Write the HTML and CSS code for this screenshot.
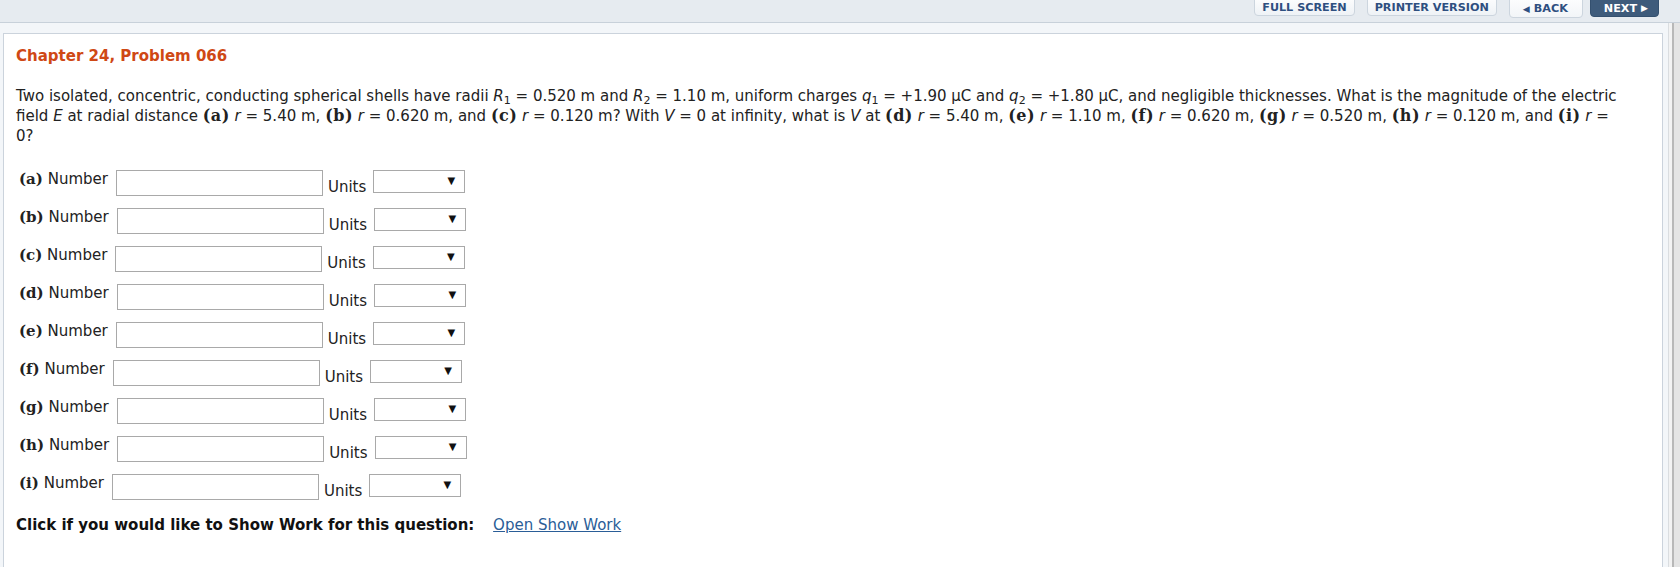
FILE: index.html
```html
<!DOCTYPE html>
<html lang="en">
<head>
    <meta charset="UTF-8">
    <title>Chapter 24, Problem 066</title>
    <link rel="stylesheet" href="styles.css">
</head>
<body>
    <div class="topbar">
        <a class="top-btn">FULL SCREEN</a>
        <a class="top-btn">PRINTER VERSION</a>
        <a class="top-btn top-btn-back"><span class="tri">&#9664;</span>BACK</a>
        <a class="top-btn top-btn-next">NEXT<span class="tri">&#9654;</span></a>
    </div>

    <div class="page">
        <div class="panel">
            <p class="title">Chapter 24, Problem 066</p>

            <p class="question">Two isolated, concentric, conducting spherical shells have radii <i>R</i><sub>1</sub> = 0.520 m and <i>R</i><sub>2</sub> = 1.10 m, uniform charges <i>q</i><sub>1</sub> = +1.90 μC and <i>q</i><sub>2</sub> = +1.80 μC, and negligible thicknesses. What is the magnitude of the electric field <i>E</i> at radial distance <b>(a)</b> <i>r</i> = 5.40 m, <b>(b)</b> <i>r</i> = 0.620 m, and <b>(c)</b> <i>r</i> = 0.120 m? With <i>V</i> = 0 at infinity, what is <i>V</i> at <b>(d)</b> <i>r</i> = 5.40 m, <b>(e)</b> <i>r</i> = 1.10 m, <b>(f)</b> <i>r</i> = 0.620 m, <b>(g)</b> <i>r</i> = 0.520 m, <b>(h)</b> <i>r</i> = 0.120 m, and <b>(i)</b> <i>r</i> = 0?</p>

            <div class="answers">
                <div class="answer-row">
                    <span class="label"><b>(a)</b> Number</span>
                    <input class="number-input" type="text">
                    <span class="units">Units</span>
                    <span class="select-wrap"><select class="units-select"><option></option></select></span>
                </div>
                <div class="answer-row">
                    <span class="label"><b>(b)</b> Number</span>
                    <input class="number-input" type="text">
                    <span class="units">Units</span>
                    <span class="select-wrap"><select class="units-select"><option></option></select></span>
                </div>
                <div class="answer-row">
                    <span class="label"><b>(c)</b> Number</span>
                    <input class="number-input" type="text">
                    <span class="units">Units</span>
                    <span class="select-wrap"><select class="units-select"><option></option></select></span>
                </div>
                <div class="answer-row">
                    <span class="label"><b>(d)</b> Number</span>
                    <input class="number-input" type="text">
                    <span class="units">Units</span>
                    <span class="select-wrap"><select class="units-select"><option></option></select></span>
                </div>
                <div class="answer-row">
                    <span class="label"><b>(e)</b> Number</span>
                    <input class="number-input" type="text">
                    <span class="units">Units</span>
                    <span class="select-wrap"><select class="units-select"><option></option></select></span>
                </div>
                <div class="answer-row">
                    <span class="label"><b>(f)</b> Number</span>
                    <input class="number-input" type="text">
                    <span class="units">Units</span>
                    <span class="select-wrap"><select class="units-select"><option></option></select></span>
                </div>
                <div class="answer-row">
                    <span class="label"><b>(g)</b> Number</span>
                    <input class="number-input" type="text">
                    <span class="units">Units</span>
                    <span class="select-wrap"><select class="units-select"><option></option></select></span>
                </div>
                <div class="answer-row">
                    <span class="label"><b>(h)</b> Number</span>
                    <input class="number-input" type="text">
                    <span class="units">Units</span>
                    <span class="select-wrap"><select class="units-select"><option></option></select></span>
                </div>
                <div class="answer-row">
                    <span class="label"><b>(i)</b> Number</span>
                    <input class="number-input" type="text">
                    <span class="units">Units</span>
                    <span class="select-wrap"><select class="units-select"><option></option></select></span>
                </div>
            </div>

            <p class="show-work">
                <b>Click if you would like to Show Work for this question:</b>
                <a class="show-work-link" href="#">Open Show Work</a>
            </p>
        </div>

        <div class="scroll-strip"></div>
    </div>
</body>
</html>
```

FILE: styles.css
```css
* {
    margin: 0;
    padding: 0;
    box-sizing: border-box;
}

html, body {
    width: 100%;
    height: 100%;
    overflow: hidden;
}

body {
    background: #f3f6f9;
    font-family: "DejaVu Sans", Verdana, sans-serif;
    font-size: 15px;
    color: #222;
}


/* top bar */

.topbar {
    display: flex;
    justify-content: flex-end;
    align-items: flex-start;
    height: 23px;
    padding-right: 21px;
    background: #e6ebf0;
    border-bottom: 1px solid #c8d1da;
    overflow: hidden;
}

.top-btn {
    display: flex;
    align-items: center;
    height: 22px;
    margin-top: -6px;
    margin-left: 12px;
    padding: 5px 7px 0;
    border: 1px solid #ccd5de;
    border-radius: 0 0 4px 4px;
    background: linear-gradient(#ffffff, #eef2f6);
    color: #2e4f80;
    font-size: 11.2px;
    font-weight: bold;
    text-decoration: none;
    white-space: nowrap;
}

.top-btn-back {
    margin-left: 12px;
    height: 24px;
    padding: 5px 14px 0 13px;
    background: linear-gradient(#ffffff, #f2f5f8);
}

.top-btn-next {
    margin-left: 7px;
    height: 23px;
    padding: 5px 10px 0 13px;
    background: #3e5b7b;
    border-color: #34506f;
    color: #fff;
}

.top-btn .tri {
    font-size: 9px;
    margin: 0 4px;
}

.top-btn-back .tri {
    margin-left: 0;
}

.top-btn-next .tri {
    margin-right: 0;
}


/* page area */

.page {
    display: flex;
    align-items: flex-start;
    height: calc(100% - 23px);
}

.panel {
    width: 1660px;
    margin: 10px 0 0 3px;
    padding: 12px 12px 40px 12px;
    background: #fff;
    border: 1px solid #cbd3dc;
}

.scroll-strip {
    align-self: stretch;
    width: 12px;
    margin-left: auto;
    border-left: 1px solid #dadde0;
    background: linear-gradient(to right, #f3f3f3 0 3px, #b8b8b8 3px 5px, #e4e4e4 5px);
}


/* question */

.title {
    font-size: 15px;
    font-weight: bold;
    line-height: 20px;
    color: #cf4815;
}

.question {
    margin-top: 20px;
    padding-right: 26px;
    line-height: 20px;
}

.question sub {
    font-size: 11px;
    line-height: 0;
    vertical-align: -3px;
}

.question b,
.label b {
    font-family: "DejaVu Serif", Georgia, serif;
}

.question b {
    font-size: 16px;
    letter-spacing: 0.5px;
}


/* answer rows */

.answers {
    margin-top: 24px;
}

.answer-row {
    display: flex;
    align-items: flex-start;
    height: 38px;
    padding-left: 3px;
}

.label {
    line-height: 16px;
    margin-top: 1px;
    white-space: nowrap;
}

.number-input {
    width: 207px;
    height: 26px;
    margin-left: 8px;
    border: 1px solid #a9a9a9;
    background: #fff;
    outline: none;
}

.units {
    line-height: 16px;
    margin: 9px 0 0 5px;
}

.select-wrap {
    position: relative;
    margin-left: 7px;
}

.units-select {
    display: block;
    width: 92px;
    height: 23px;
    border: 1px solid #a9a9a9;
    border-radius: 0;
    background: #fff;
    appearance: none;
    -webkit-appearance: none;
    outline: none;
}

.select-wrap::after {
    content: "\25BC";
    position: absolute;
    right: 10px;
    top: 5px;
    font-size: 10px;
    color: #111;
    pointer-events: none;
}


/* show work */

.show-work {
    margin-top: 3px;
    line-height: 20px;
}

.show-work b {
    color: #111;
}

.show-work-link {
    margin-left: 14px;
    color: #2a5d97;
}
```
